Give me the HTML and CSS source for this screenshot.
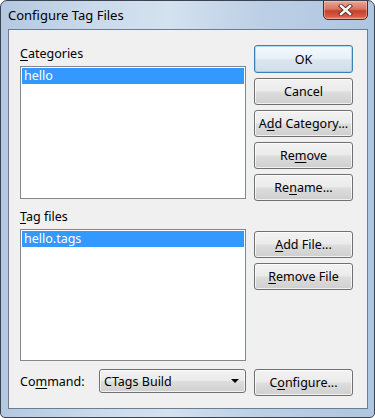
FILE: index.html
```html
<!DOCTYPE html>
<html lang="en">
<head>
    <meta charset="UTF-8">
    <title>Configure Tag Files</title>
    <link rel="stylesheet" href="styles.css">
</head>
<body>
    <div class="window">
        <div class="titlebar">
            <span class="title">Configure Tag Files</span>
            <button class="close-btn" aria-label="Close">
                <svg width="17" height="12" viewBox="0 0 17 12">
                    <path d="M4 2 L13 10 M13 2 L4 10" stroke="#5a2a24" stroke-width="4.2" stroke-linecap="square" fill="none"/>
                    <path d="M4 2 L13 10 M13 2 L4 10" stroke="#ffffff" stroke-width="2.4" stroke-linecap="square" fill="none"/>
                </svg>
            </button>
        </div>
        <div class="client">
            <div class="section">
                <div class="left-col">
                    <div class="label"><u>C</u>ategories</div>
                    <div class="listbox list-categories">
                        <div class="list-item selected">hello</div>
                    </div>
                </div>
                <div class="button-col">
                    <button class="btn btn-default">OK</button>
                    <button class="btn">Cancel</button>
                    <button class="btn">A<u>d</u>d Category...</button>
                    <button class="btn">Re<u>m</u>ove</button>
                    <button class="btn">Re<u>n</u>ame...</button>
                </div>
            </div>
            <div class="section section-tags">
                <div class="left-col">
                    <div class="label"><u>T</u>ag files</div>
                    <div class="listbox list-tags">
                        <div class="list-item selected">hello.tags</div>
                    </div>
                </div>
                <div class="button-col button-col-tags">
                    <button class="btn"><u>A</u>dd File...</button>
                    <button class="btn"><u>R</u>emove File</button>
                </div>
            </div>
            <div class="command-row">
                <div class="command-left">
                    <span class="command-label">Co<u>m</u>mand:</span>
                    <div class="combo">
                        <span>CTags Build</span>
                        <span class="combo-arrow"></span>
                    </div>
                </div>
                <button class="btn">C<u>o</u>nfigure...</button>
            </div>
        </div>
    </div>
</body>
</html>
```

FILE: styles.css
```css
body {
    margin: 0;
    font-family: 'Noto Sans', 'Noto Sans CJK SC', sans-serif;
    font-size: 12px;
    color: #000;
    background: #fff;
}
u {
    text-decoration: underline;
    text-underline-offset: 2px;
}
.window {
    width: 375px;
    height: 418px;
    box-sizing: border-box;
    border: 1px solid #3b4350;
    border-radius: 7px 7px 5px 5px;
    background: linear-gradient(90deg, #b3c8e1 0%, #cbdaeb 25%, #d4e1ef 45%, #bccfe5 70%, #afc6e0 100%);
    overflow: hidden;
    display: flex;
    flex-direction: column;
}
.titlebar {
    height: 28px;
    display: flex;
    justify-content: space-between;
    align-items: flex-start;
    padding-left: 7px;
    padding-right: 6px;
}
.title {
    font-size: 13px;
    line-height: 13px;
    margin-top: 8px;
    color: #000;
}
.close-btn {
    width: 45px;
    height: 20px;
    margin-top: -1px;
    border: 1px solid #5b2420;
    border-radius: 0 0 5px 5px;
    background: linear-gradient(180deg, #e9a99b 0%, #d9735f 45%, #c7402a 55%, #d45c43 85%, #e48a6d 100%);
    box-shadow: inset 0 0 0 1px rgba(255, 210, 200, 0.45);
    display: flex;
    align-items: center;
    justify-content: center;
    padding: 0;
}
.client {
    flex: 1;
    margin: 0 6px 8px 7px;
    border: 1px solid #6b7d94;
    background: #f0f0f0;
    padding: 15px 0 0 11px;
    display: flex;
    flex-direction: column;
}
.section {
    display: flex;
    gap: 8px;
}
.section-tags {
    margin-top: 7px;
}
.left-col {
    width: 226px;
    display: flex;
    flex-direction: column;
}
.label {
    height: 21px;
    line-height: 17px;
    font-size: 12.5px;
}
.listbox {
    box-sizing: border-box;
    border: 1px solid #828790;
    background: #fff;
    padding: 1px;
}
.list-categories {
    height: 133px;
}
.list-tags {
    height: 132px;
}
.list-item {
    height: 16px;
    line-height: 16px;
    padding-left: 2px;
    font-size: 12.5px;
}
.list-item.selected {
    background: #3399ff;
    color: #fff;
}
.button-col {
    display: flex;
    flex-direction: column;
    gap: 5px;
}
.button-col-tags {
    margin-top: 23px;
}
.btn {
    width: 99px;
    height: 27px;
    box-sizing: border-box;
    border: 1px solid #707070;
    border-radius: 3px;
    background: linear-gradient(180deg, #f2f2f2 0%, #ebebeb 48%, #dddddd 52%, #cfcfcf 100%);
    box-shadow: inset 0 0 0 1px rgba(255, 255, 255, 0.7);
    font-family: inherit;
    font-size: 12.5px;
    color: #000;
    padding: 0;
}
.btn-default {
    height: 28px;
    border-color: #3c7fb1;
    background: linear-gradient(180deg, #f4f9fc 0%, #e9f1f7 48%, #dbe6ef 52%, #d0dde8 100%);
    box-shadow: inset 0 0 0 1px rgba(120, 200, 240, 0.6);
}
.command-row {
    display: flex;
    gap: 8px;
    margin-top: 8px;
}
.command-left {
    width: 226px;
    display: flex;
    align-items: center;
    height: 24px;
}
.command-label {
    width: 79px;
    font-size: 12.5px;
}
.combo {
    flex: 1;
    height: 24px;
    box-sizing: border-box;
    border: 1px solid #707070;
    border-radius: 3px;
    background: linear-gradient(180deg, #f2f2f2 0%, #ebebeb 48%, #dddddd 52%, #cfcfcf 100%);
    box-shadow: inset 0 0 0 1px rgba(255, 255, 255, 0.7);
    display: flex;
    align-items: center;
    justify-content: space-between;
    padding: 0 6px 0 4px;
    font-size: 12.5px;
}
.combo-arrow {
    width: 0;
    height: 0;
    border-left: 4px solid transparent;
    border-right: 4px solid transparent;
    border-top: 4px solid #000;
}
```
